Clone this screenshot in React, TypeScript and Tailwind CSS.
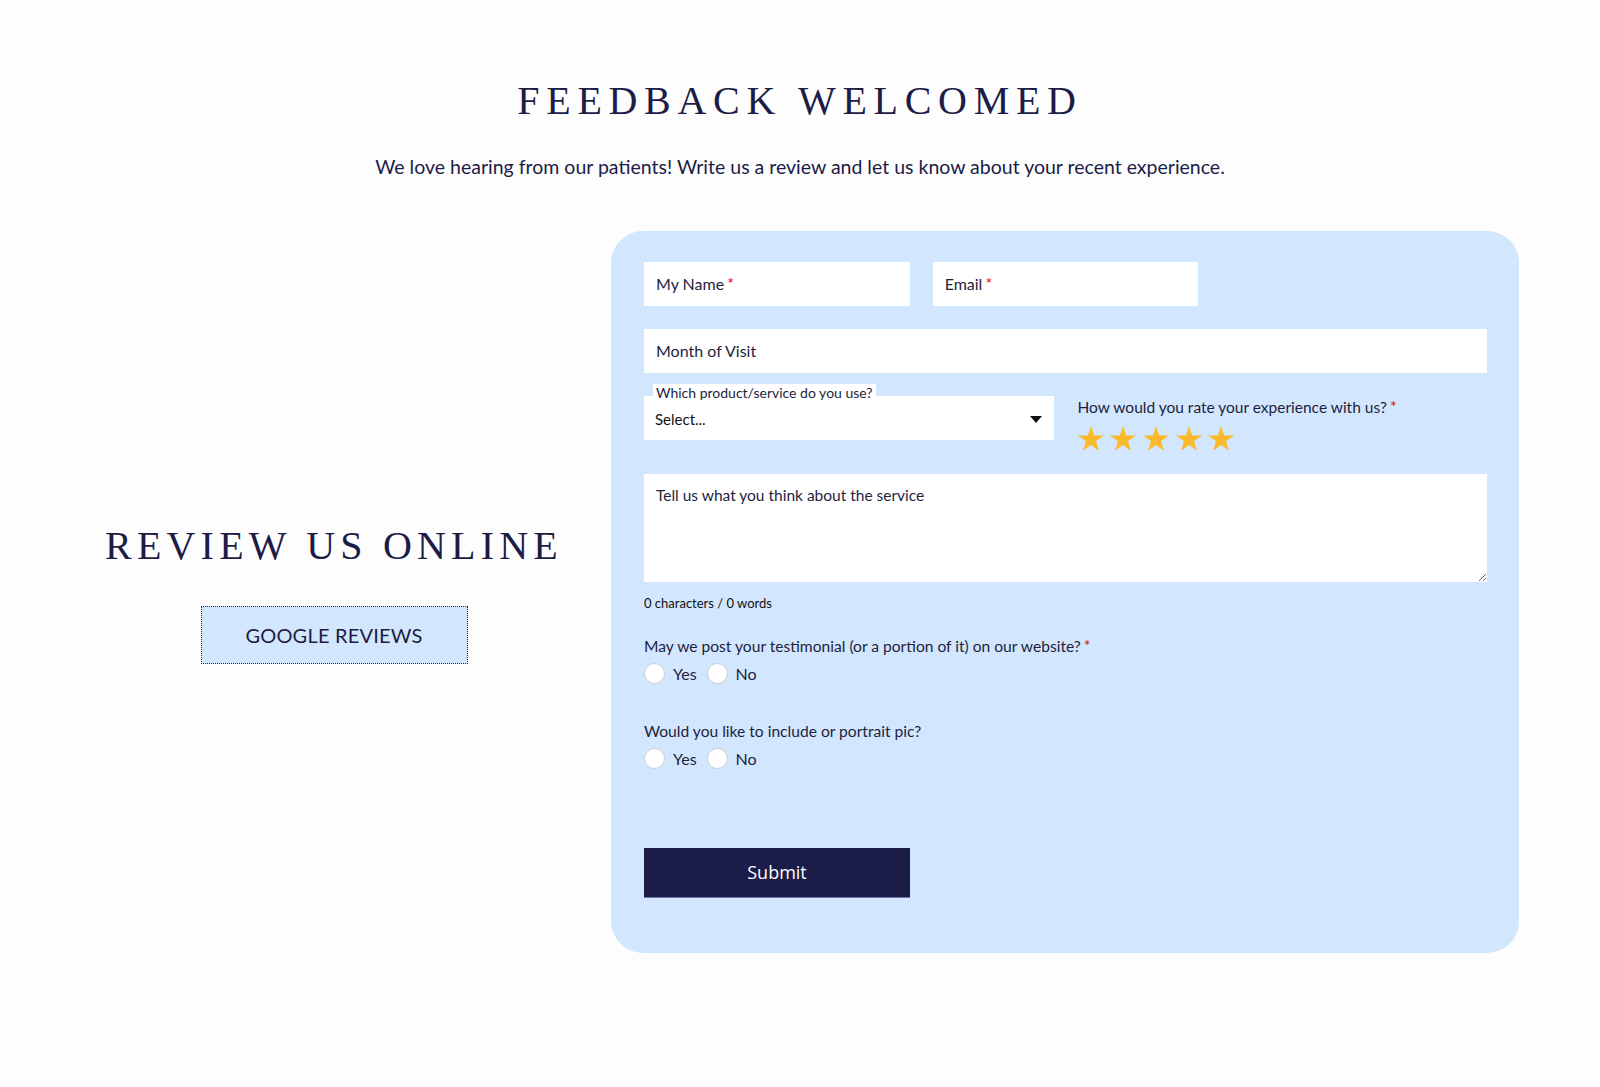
import React from "react";

const NAVY = "text-[#1c1c47]";

function Star() {
  return (
    <svg width="26" height="25" viewBox="0 0 26 25" aria-hidden="true">
      <polygon
        points="13,0 16.07,9.45 26,9.45 17.96,15.28 21.04,24.73 13,18.89 4.96,24.73 8.04,15.28 0,9.45 9.93,9.45"
        fill="#fcb92b"
      />
    </svg>
  );
}

function Radio({ label }: { label: string }) {
  return (
    <div className="flex items-center">
      <span className="w-[21px] h-[21px] rounded-full bg-white border border-[#c9cdd4] shrink-0" />
      <span className="ml-[8px] text-[16px] leading-[20px] text-[#1e1e3f]">{label}</span>
    </div>
  );
}

function Req() {
  return <span className="ml-[3px] text-[#d0021b] text-[16px] relative -top-[1px]">*</span>;
}

function Field({ label, required }: { label: string; required?: boolean }) {
  return (
    <div className="h-[44px] bg-white flex items-center px-[12px] text-[16px] text-[#1e1e3f]">
      <span>{label}</span>
      {required && <Req />}
    </div>
  );
}

export default function App() {
  return (
    <div
      className="min-h-[1087px] bg-[#fdfdfe] pt-[81px]"
      style={{ fontFamily: "Lato, 'Open Sans', sans-serif" }}
    >
      <h1
        className={`text-center text-[40px] leading-none tracking-[6.7px] ${NAVY}`}
        style={{ fontFamily: "'Liberation Serif', 'Times New Roman', serif" }}
      >
        FEEDBACK WELCOMED
      </h1>
      <p className={`mt-[32px] text-center text-[19.5px] leading-[28px] ${NAVY}`}>
        We love hearing from our patients! Write us a review and let us know about your recent experience.
      </p>

      <div className="mt-[50px] flex pl-[57px]">
        <div className="w-[554px] flex flex-col items-center justify-center pt-[6px]">
          <h2
            className={`text-[40px] leading-none tracking-[5.2px] ${NAVY}`}
            style={{ fontFamily: "'Liberation Serif', 'Times New Roman', serif" }}
          >
            REVIEW US ONLINE
          </h2>
          <button
            className={`mt-[40px] w-[267px] h-[58px] bg-[#d2e6fc] border border-dotted border-[#2a2a3a] text-[20px] tracking-[0.2px] ${NAVY}`}
          >
            GOOGLE REVIEWS
          </button>
        </div>

        <div className="w-[908px] bg-[#d2e7fd] rounded-[32px] pt-[31px] pl-[33px] pr-[32px] pb-[55px] flex flex-col">
          <div className="grid grid-cols-3 gap-x-[23px]">
            <Field label="My Name" required />
            <Field label="Email" required />
          </div>

          <div className="mt-[23px]">
            <Field label="Month of Visit" />
          </div>

          <div className="mt-[11px] grid grid-cols-2 gap-x-[24px]">
            <div className="relative pt-[12px]">
              <div className="h-[44px] bg-white flex items-center justify-between pl-[11px] pr-[12px]">
                <span className="text-[15px] text-[#111] mt-[2px]">Select...</span>
                <svg width="12" height="7" viewBox="0 0 12 7" className="mt-[2px]">
                  <path d="M0 0h12L6 7z" fill="#111" />
                </svg>
              </div>
              <span className="absolute top-0 left-[9px] bg-white px-[3px] text-[14px] leading-[18px] text-[#1e1e3f]">
                Which product/service do you use?
              </span>
            </div>
            <div className="pt-[13px]">
              <div className="text-[15.5px] leading-[20px] text-[#1e1e3f]">
                How would you rate your experience with us?
                <Req />
              </div>
              <div className="mt-[8px] flex gap-[6.7px] h-[26px] items-center">
                <Star />
                <Star />
                <Star />
                <Star />
                <Star />
              </div>
            </div>
          </div>

          <textarea
            className="mt-[23px] h-[108px] bg-white px-[12px] py-[10px] text-[15.5px] leading-[22px] text-[#1e1e3f] placeholder:text-[#1e1e3f] outline-none resize-y block w-full"
            placeholder="Tell us what you think about the service"
          />

          <div className="mt-[13px] text-[13px] leading-[16px] text-[#111]">0 characters / 0 words</div>

          <div className="mt-[25px] text-[15.6px] leading-[20px] text-[#1e1e3f]">
            May we post your testimonial (or a portion of it) on our website?
            <Req />
          </div>
          <div className="mt-[7px] flex gap-[10px]">
            <Radio label="Yes" />
            <Radio label="No" />
          </div>

          <div className="mt-[37px] text-[15.6px] leading-[20px] text-[#1e1e3f]">
            Would you like to include or portrait pic?
          </div>
          <div className="mt-[7px] flex gap-[10px]">
            <Radio label="Yes" />
            <Radio label="No" />
          </div>

          <button
            className="mt-[79px] w-[266px] h-[50px] bg-[#1c1c48] text-white text-[18px] border-b border-[#6b7aa8]"
            style={{ fontFamily: "'Open Sans', sans-serif" }}
          >
            Submit
          </button>
        </div>
      </div>
    </div>
  );
}
